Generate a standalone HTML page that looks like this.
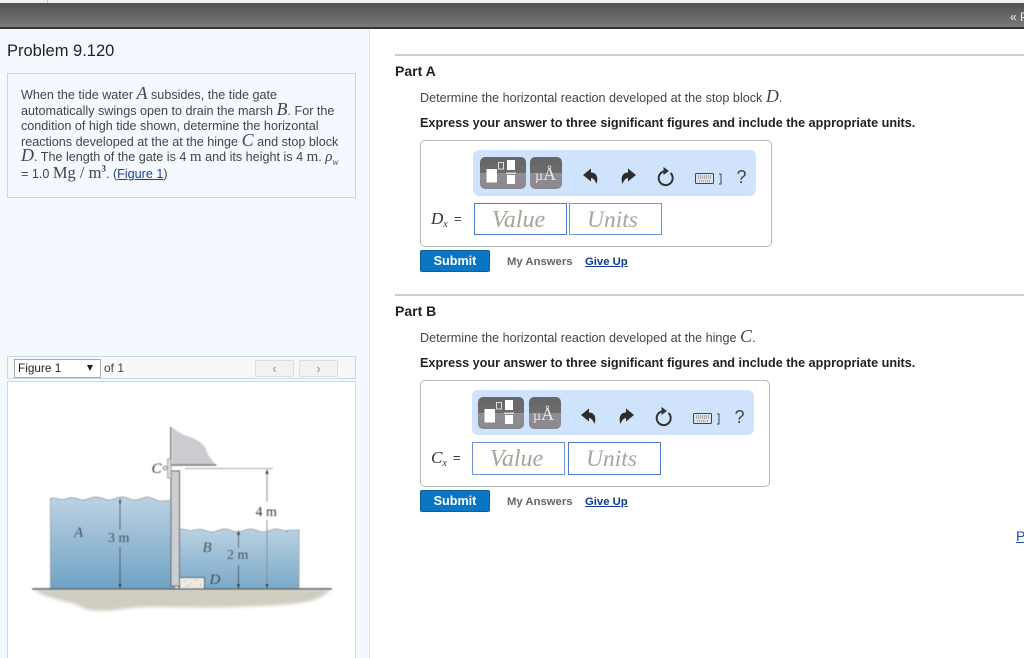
<!DOCTYPE html>
<html><head><meta charset="utf-8"><style>
html,body{margin:0;padding:0;width:1024px;height:658px;overflow:hidden;background:#fff}
body{position:relative;font-family:"Liberation Sans",sans-serif;color:#333}
.a{position:absolute;white-space:nowrap}
.m{font-family:"Liberation Serif",serif}
.i{font-family:"Liberation Serif",serif;font-style:italic}
.t{font-size:12.6px;line-height:15px;color:#444}
.v{font-family:"Liberation Serif",serif;font-style:italic;font-size:18px;line-height:10px}
.u{font-family:"Liberation Serif",serif;font-size:15px;line-height:10px}
.b{font-size:12.640px;font-weight:bold;color:#222}
.p{font-size:14px;font-weight:bold;color:#222;line-height:15px}
.box{position:absolute;box-sizing:border-box;border:1px solid #b9b9b9;border-radius:5px;background:#fff}
.tb{position:absolute;background:#cfe4fc;border-radius:6px}
.btn{position:absolute;border-radius:5px;background:linear-gradient(#666 0,#6c6c6c 50%,#8e8e94 50%,#88888e 100%)}
.inp{position:absolute;box-sizing:border-box;border:1px solid #4a76d6;background:#fff;font:italic 24px "Liberation Serif",serif;color:#aaa39a;text-align:center;line-height:33px}
.sub{position:absolute;box-sizing:border-box;background:#0b76c4;border:1px solid #0a5f9e;border-radius:2px;color:#fff;font-size:12.600px;font-weight:bold;text-align:center;line-height:20px}
.my{font-size:11.300px;font-weight:bold;color:#666}
.gu{font-size:11.300px;font-weight:bold;color:#0b3a9e;text-decoration:underline}
</style></head><body>
<div class="a" style="left:0;top:0;width:1024px;height:3px;background:#f0f0f0"></div>
<div class="a" style="left:47px;top:0;width:1px;height:3px;background:#ccc"></div>
<div class="a" style="left:0;top:3px;width:1024px;height:24px;background:linear-gradient(#505050,#7a7a7a)"></div>
<div class="a" style="left:0;top:27px;width:1024px;height:2px;background:#333"></div>
<div class="a" style="left:1010px;top:11px;font-size:12px;color:#eef;line-height:13px">« P</div>

<div class="a" style="left:0;top:29px;width:369px;height:629px;background:#f4f9ff;border-right:1px solid #d9e3ee"></div>
<div class="a" style="left:7px;top:42px;font-size:16.500px;color:#222;line-height:18px">Problem 9.120</div>
<div class="a" style="left:7px;top:73px;width:347px;height:123px;border:1px solid #c9d8e8"></div>
<div class="a t" style="left:21px;top:88px">When the tide water <span class="v">A</span> subsides, the tide gate</div>
<div class="a t" style="left:21px;top:104px">automatically swings open to drain the marsh <span class="v">B</span>. For the</div>
<div class="a t" style="left:21px;top:119px">condition of high tide shown, determine the horizontal</div>
<div class="a t" style="left:21px;top:135px">reactions developed at the at the hinge <span class="v">C</span> and stop block</div>
<div class="a t" style="left:21px;top:150px"><span class="v">D</span>. The length of the gate is 4 <span class="u">m</span> and its height is 4 <span class="u">m</span>. <span class="i" style="font-size:15px;line-height:10px">ρ<sub style="font-size:9px;line-height:0">w</sub></span></div>
<div class="a t" style="left:21px;top:167px">= 1.0 <span class="m" style="font-size:16.500px;line-height:10px">Mg / m<sup style="font-size:9px;line-height:0;font-weight:bold">3</sup></span>. (<span style="color:#1a3fa0;text-decoration:underline">Figure 1</span>)</div>

<div class="a" style="left:7px;top:356px;width:347px;height:21px;border:1px solid #c9d8e8;background:#f8f8f8"></div>
<div class="a" style="left:14px;top:359px;width:85px;height:17px;border:1px solid #aaa;background:#fff;font-size:11.800px;line-height:17px;color:#222;text-indent:3px">Figure 1<span style="position:absolute;left:72px;top:5px;width:0;height:0;border-left:3.500px solid transparent;border-right:3.500px solid transparent;border-top:6px solid #222"></span></div>
<div class="a" style="left:104px;top:361px;font-size:12px;color:#444;line-height:15px">of 1</div>
<div class="a" style="left:255px;top:360px;width:37px;height:15px;border:1px solid #ddd;background:#f2f2f2;border-radius:2px;color:#aaa;font-size:13px;font-weight:bold;line-height:16px;text-align:center">‹</div>
<div class="a" style="left:299px;top:360px;width:37px;height:15px;border:1px solid #ddd;background:#f2f2f2;border-radius:2px;color:#aaa;font-size:13px;font-weight:bold;line-height:16px;text-align:center">›</div>
<div class="a" style="left:7px;top:381px;width:347px;height:277px;border:1px solid #c9d8e8;border-bottom:0;background:#fff"></div>

<svg class="a" style="left:0;top:0" width="370" height="658" viewBox="0 0 370 658">
<defs>
<linearGradient id="w" x1="0" y1="0" x2="0" y2="1"><stop offset="0" stop-color="#bcd2e2"/><stop offset="1" stop-color="#6fa2c4"/></linearGradient>
<linearGradient id="w2" x1="0" y1="0" x2="0" y2="1"><stop offset="0" stop-color="#bad1e2"/><stop offset="1" stop-color="#7aa9c9"/></linearGradient>
<filter id="bl"><feGaussianBlur stdDeviation="1.5"/></filter>
<filter id="bs"><feGaussianBlur stdDeviation="0.4"/></filter>
</defs>
<path d="M33 589H330L328 592C322 598 310 602 300 603C280 606 255 606 233 607C205 608 175 607 150 607C135 607 125 609 115 610C105 611 98 611 90 610C84 609 80 607 75 604C62 601 52 598 43 595Z" fill="#cfcdc0" filter="url(#bl)"/>
<path d="M172 427L177 431L184 435L193 438L200 442L205 447L208 455L213 461L215 465H172Z" fill="#cbccd0" filter="url(#bs)"/>
<g filter="url(#bs)">
<path d="M50.500 498.500c5-2 8 2 13 1s8-3 13-1 8 2 13 0 8-2 13 0 8 2 13 0 8-2 13 0 8 2 13 0 8-2 13 1 8 1 20 1V589H50.500Z" fill="url(#w)" stroke="#8a9aa5" stroke-width="0.8"/>
<path d="M179 529.500c5-2 8 2 13 1s8-2 13 0 8 2 13 0 8-2 13 0 8 2 13 0 8-2 13 0 8 2 13 0 8-2 13 0 6-1 3 0L299 530V589H179Z" fill="url(#w2)" stroke="#8a9aa5" stroke-width="0.8"/>
<rect x="171" y="471" width="8.500" height="115" fill="#ccced1" stroke="#555" stroke-width="1"/>
<rect x="179.500" y="577.500" width="25" height="11.500" fill="#eceae4" stroke="#444" stroke-width="1"/>
<path d="M184 581h1M190 584h1M196 580h1M200 585h1M187 586h1" stroke="#999" stroke-width="1.200"/>
<path d="M170.800 427V468" stroke="#77797c" stroke-width="1.400"/>
<path d="M171 465H216.500" stroke="#77797c" stroke-width="1.600"/>
<rect x="167.500" y="459" width="3.500" height="19" fill="#ddd" stroke="#888" stroke-width="0.700"/>
<circle cx="165" cy="468" r="2" fill="#ddd" stroke="#777" stroke-width="0.800"/>
<path d="M185 468.500H273" stroke="#aaa" stroke-width="1"/>
<path d="M32 589H332" stroke="#666" stroke-width="1.400"/>
<path d="M120 499V530M120 547V587" stroke="#333" stroke-width="0.800"/>
<path d="M118.700 503L120 498L121.300 503ZM118.700 584L120 589L121.300 584Z" fill="#222"/>
<path d="M238.500 531V548M238.500 565V587" stroke="#333" stroke-width="0.800"/>
<path d="M237 535L238.500 530L240 535ZM237 584L238.500 589L240 584Z" fill="#222"/>
<path d="M267 470V502M267 520V587" stroke="#888" stroke-width="0.900"/>
<path d="M265.500 474L267 469L268.500 474ZM265.500 584L267 589L268.500 584Z" fill="#333"/>
<g font-family="Liberation Serif,serif" font-size="14" fill="#333">
<text x="255.500" y="516">4 m</text>
<text x="108" y="542">3 m</text>
<text x="227" y="559">2 m</text>
<g font-style="italic" font-size="15">
<text x="151.500" y="473">C</text>
<text x="74" y="537">A</text>
<text x="202.500" y="552">B</text>
<text x="209.500" y="584">D</text>
</g></g></g>
</svg>

<div class="a" style="left:395px;top:54px;width:629px;height:2px;background:#ccc"></div>
<div class="a p" style="left:395px;top:64px">Part A</div>
<div class="a t" style="left:420px;top:91px">Determine the horizontal reaction developed at the stop block <span class="v">D</span>.</div>
<div class="a b" style="left:420px;top:116px;line-height:15px">Express your answer to three significant figures and include the appropriate units.</div>

<div class="box" style="left:420px;top:140px;width:352px;height:107px"></div>
<div class="tb" style="left:473px;top:150px;width:283px;height:46px"></div>
<div class="btn" style="left:480px;top:157px;width:46px;height:32px"></div>
<div class="btn" style="left:530px;top:157px;width:32px;height:32px"></div>
<svg class="a" style="left:480px;top:157px" width="280" height="34" viewBox="480 157 280 34">
<rect x="486.500" y="169" width="10.500" height="13.500" fill="#fff"/><rect x="498.500" y="162.500" width="5" height="6.500" fill="none" stroke="#ddd"/><rect x="507" y="160" width="8" height="10" fill="#fff"/><rect x="506" y="172.500" width="10" height="1.500" fill="#ddd"/><rect x="507" y="175" width="8" height="9" fill="#fff"/>
<text x="535" y="180" font-family="Liberation Serif,serif" font-size="14" fill="#e8e8e8">µ<tspan font-size="18">Å</tspan></text>
<path d="M583 175L591 168.500V172.500C597 172.500 598.500 178 596.500 184C595 180 593 178 591 178V181.500Z" fill="#2d2d2d"/>
<path d="M636 175L628 168.500V172.500C622 172.500 620.500 178 622.500 184C624 180 626 178 628 178V181.500Z" fill="#2d2d2d"/>
<path d="M664 171.300A7 7 0 1 0 670.500 173" fill="none" stroke="#333" stroke-width="2"/><path d="M663.500 167L669 171L663.500 175Z" fill="#333"/>
<rect x="695.500" y="173.500" width="18" height="10" rx="1" fill="#dfe3ea" stroke="#444"/><path d="M698 176h13M698 178h13M699 181h11" stroke="#777" stroke-width="1" stroke-dasharray="1 1"/>
<path d="M719 174h2v10h-2" fill="none" stroke="#444"/>
<text x="736.500" y="183" font-size="18" fill="#444" font-family="Liberation Sans,sans-serif">?</text>
</svg>
<div class="a i" style="left:431px;top:209px;font-size:17px;line-height:20px;color:#333">D<span style="font-size:10px;position:relative;top:3px">x</span></div>
<div class="a" style="left:454px;top:209px;font-size:13px;line-height:20px;color:#333">=</div>
<div class="inp" style="left:474px;top:203px;width:93px;height:32px;padding-right:4px">Value</div>
<div class="inp" style="left:569px;top:203px;width:93px;height:32px;border-color:#6f94e0;font-size:23.500px;padding-right:6px">Units</div>
<div class="sub" style="left:420px;top:250px;width:70px;height:22px">Submit</div>
<div class="a my" style="left:507px;top:255px;line-height:14px">My Answers</div>
<div class="a gu" style="left:585px;top:255px;line-height:14px">Give Up</div>

<div class="a" style="left:395px;top:294px;width:629px;height:2px;background:#ccc"></div>
<div class="a p" style="left:395px;top:304px">Part B</div>
<div class="a t" style="left:420px;top:331px">Determine the horizontal reaction developed at the hinge <span class="v">C</span>.</div>
<div class="a b" style="left:420px;top:356px;line-height:15px">Express your answer to three significant figures and include the appropriate units.</div>

<div class="box" style="left:420px;top:380px;width:350px;height:107px"></div>
<div class="tb" style="left:472px;top:390px;width:282px;height:45px"></div>
<div class="btn" style="left:478px;top:397px;width:46px;height:32px"></div>
<div class="btn" style="left:529px;top:397px;width:32px;height:32px"></div>
<svg class="a" style="left:478px;top:397px" width="280" height="34" viewBox="480 157 280 34">
<rect x="486.500" y="169" width="10.500" height="13.500" fill="#fff"/><rect x="498.500" y="162.500" width="5" height="6.500" fill="none" stroke="#ddd"/><rect x="507" y="160" width="8" height="10" fill="#fff"/><rect x="506" y="172.500" width="10" height="1.500" fill="#ddd"/><rect x="507" y="175" width="8" height="9" fill="#fff"/>
<text x="535" y="180" font-family="Liberation Serif,serif" font-size="14" fill="#e8e8e8">µ<tspan font-size="18">Å</tspan></text>
<path d="M583 175L591 168.500V172.500C597 172.500 598.500 178 596.500 184C595 180 593 178 591 178V181.500Z" fill="#2d2d2d"/>
<path d="M636 175L628 168.500V172.500C622 172.500 620.500 178 622.500 184C624 180 626 178 628 178V181.500Z" fill="#2d2d2d"/>
<path d="M664 171.300A7 7 0 1 0 670.500 173" fill="none" stroke="#333" stroke-width="2"/><path d="M663.500 167L669 171L663.500 175Z" fill="#333"/>
<rect x="695.500" y="173.500" width="18" height="10" rx="1" fill="#dfe3ea" stroke="#444"/><path d="M698 176h13M698 178h13M699 181h11" stroke="#777" stroke-width="1" stroke-dasharray="1 1"/>
<path d="M719 174h2v10h-2" fill="none" stroke="#444"/>
<text x="736.500" y="183" font-size="18" fill="#444" font-family="Liberation Sans,sans-serif">?</text>
</svg>
<div class="a i" style="left:431px;top:448px;font-size:17px;line-height:20px;color:#333">C<span style="font-size:10px;position:relative;top:3px">x</span></div>
<div class="a" style="left:453px;top:448px;font-size:13px;line-height:20px;color:#333">=</div>
<div class="inp" style="left:472px;top:442px;width:93px;height:33px;border-color:#6f94e0;padding-right:4px">Value</div>
<div class="inp" style="left:568px;top:442px;width:93px;height:33px;font-size:23.500px;padding-right:6px">Units</div>
<div class="sub" style="left:420px;top:490px;width:70px;height:22px">Submit</div>
<div class="a my" style="left:507px;top:495px;line-height:14px">My Answers</div>
<div class="a gu" style="left:585px;top:495px;line-height:14px">Give Up</div>

<div class="a" style="left:1016px;top:528px;font-size:14px;line-height:16px;color:#1a4fb0;text-decoration:underline">P</div>
</body></html>
